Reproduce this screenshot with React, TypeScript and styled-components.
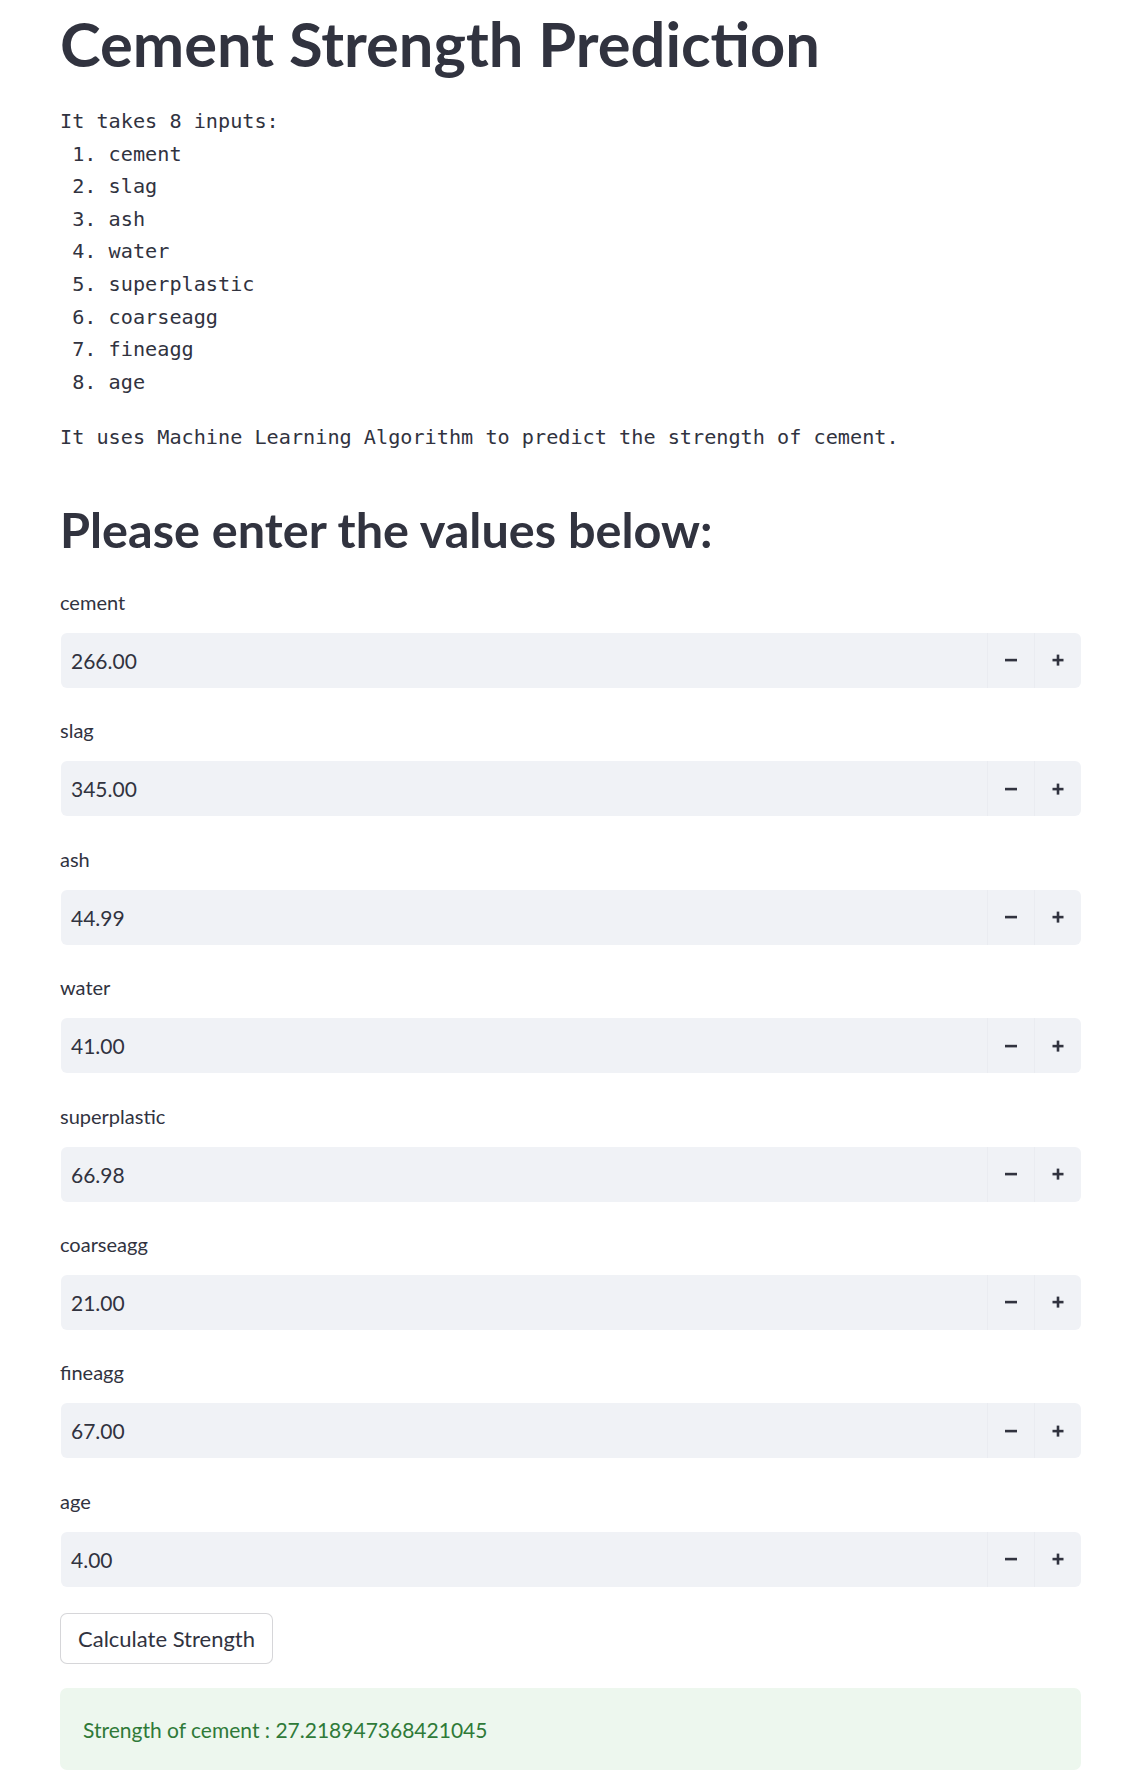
import React from 'react';
import styled, {createGlobalStyle} from 'styled-components';

const GlobalStyle = createGlobalStyle`
	html, body {
		margin: 0;
		padding: 0;
		background: #ffffff;
	}
	body {
		font-family: "Source Sans Pro", Lato, "Noto Sans", sans-serif;
		color: #31333f;
	}
`;

const Page = styled.main`
	display: flex;
	flex-direction: column;
	align-items: stretch;
	padding: 6px 65px 25px 60px;
`;

const Title = styled.h1`
	margin: 0;
	font-size: 61.4px;
	line-height: 74px;
	font-weight: 700;
	color: #31333f;
`;

const MonoText = styled.pre<{$gap: number}>`
	margin: ${p => p.$gap}px 0 0;
	font-family: "DejaVu Sans Mono", "Liberation Mono", monospace;
	font-size: 20.2px;
	line-height: 32.6px;
	color: #31333f;
	white-space: pre;
`;

const Heading = styled.h2`
	margin: 46px 0 0;
	font-size: 48.6px;
	line-height: 59px;
	font-weight: 700;
	color: #31333f;
`;

const FieldList = styled.div`
	display: flex;
	flex-direction: column;
	gap: 27.4px;
	margin-top: 28px;
`;

const Field = styled.div`
	display: flex;
	flex-direction: column;
`;

const Label = styled.label`
	font-size: 20px;
	line-height: 30px;
	margin-bottom: 16px;
	color: #31333f;
`;

const InputBox = styled.div`
	display: flex;
	align-items: stretch;
	height: 55px;
	margin-left: 1px;
	background: #f0f2f6;
	border-radius: 6px;
	overflow: hidden;
`;

const Value = styled.div`
	flex: 1;
	display: flex;
	align-items: center;
	padding-left: 10px;
	font-size: 21px;
	color: #31333f;
`;

const StepButton = styled.div`
	width: 46px;
	display: flex;
	align-items: center;
	justify-content: center;
	border-left: 1px solid #eaecf1;
	color: #31333f;
`;

const ActionButton = styled.button`
	align-self: flex-start;
	margin-top: 26px;
	height: 51px;
	padding: 0 17px;
	background: #ffffff;
	border: 1px solid rgba(49, 51, 63, 0.2);
	border-radius: 7px;
	font-family: inherit;
	font-size: 22px;
	color: #31333f;
`;

const Success = styled.div`
	margin-top: 24px;
	height: 80px;
	display: flex;
	align-items: center;
	padding: 2px 23px 0;
	background: #edf7ee;
	border-radius: 7px;
	font-size: 21px;
	color: #2f7a38;
`;

const Minus = () => (
	<svg width="14" height="14" viewBox="0 0 14 14">
		<rect x="1" y="5.8" width="12" height="2.6" fill="currentColor" />
	</svg>
);

const Plus = () => (
	<svg width="14" height="14" viewBox="0 0 14 14">
		<rect x="1.5" y="5.8" width="11" height="2.6" fill="currentColor" />
		<rect x="5.7" y="1.6" width="2.6" height="11" fill="currentColor" />
	</svg>
);

const inputs = [
	{name: 'cement', value: '266.00'},
	{name: 'slag', value: '345.00'},
	{name: 'ash', value: '44.99'},
	{name: 'water', value: '41.00'},
	{name: 'superplastic', value: '66.98'},
	{name: 'coarseagg', value: '21.00'},
	{name: 'fineagg', value: '67.00'},
	{name: 'age', value: '4.00'},
];

const intro = [
	'It takes 8 inputs:',
	...inputs.map((input, i) => ` ${i + 1}. ${input.name}`),
].join('\n');

const App = () => (
	<>
		<GlobalStyle />
		<Page>
			<Title>Cement Strength Prediction</Title>
			<MonoText $gap={25}>{intro}</MonoText>
			<MonoText $gap={23}>
				It uses Machine Learning Algorithm to predict the strength of cement.
			</MonoText>
			<Heading>Please enter the values below:</Heading>
			<FieldList>
				{inputs.map(input => (
					<Field key={input.name}>
						<Label>{input.name}</Label>
						<InputBox>
							<Value>{input.value}</Value>
							<StepButton>
								<Minus />
							</StepButton>
							<StepButton>
								<Plus />
							</StepButton>
						</InputBox>
					</Field>
				))}
			</FieldList>
			<ActionButton>Calculate Strength</ActionButton>
			<Success>Strength of cement : 27.218947368421045</Success>
		</Page>
	</>
);

export default App;
